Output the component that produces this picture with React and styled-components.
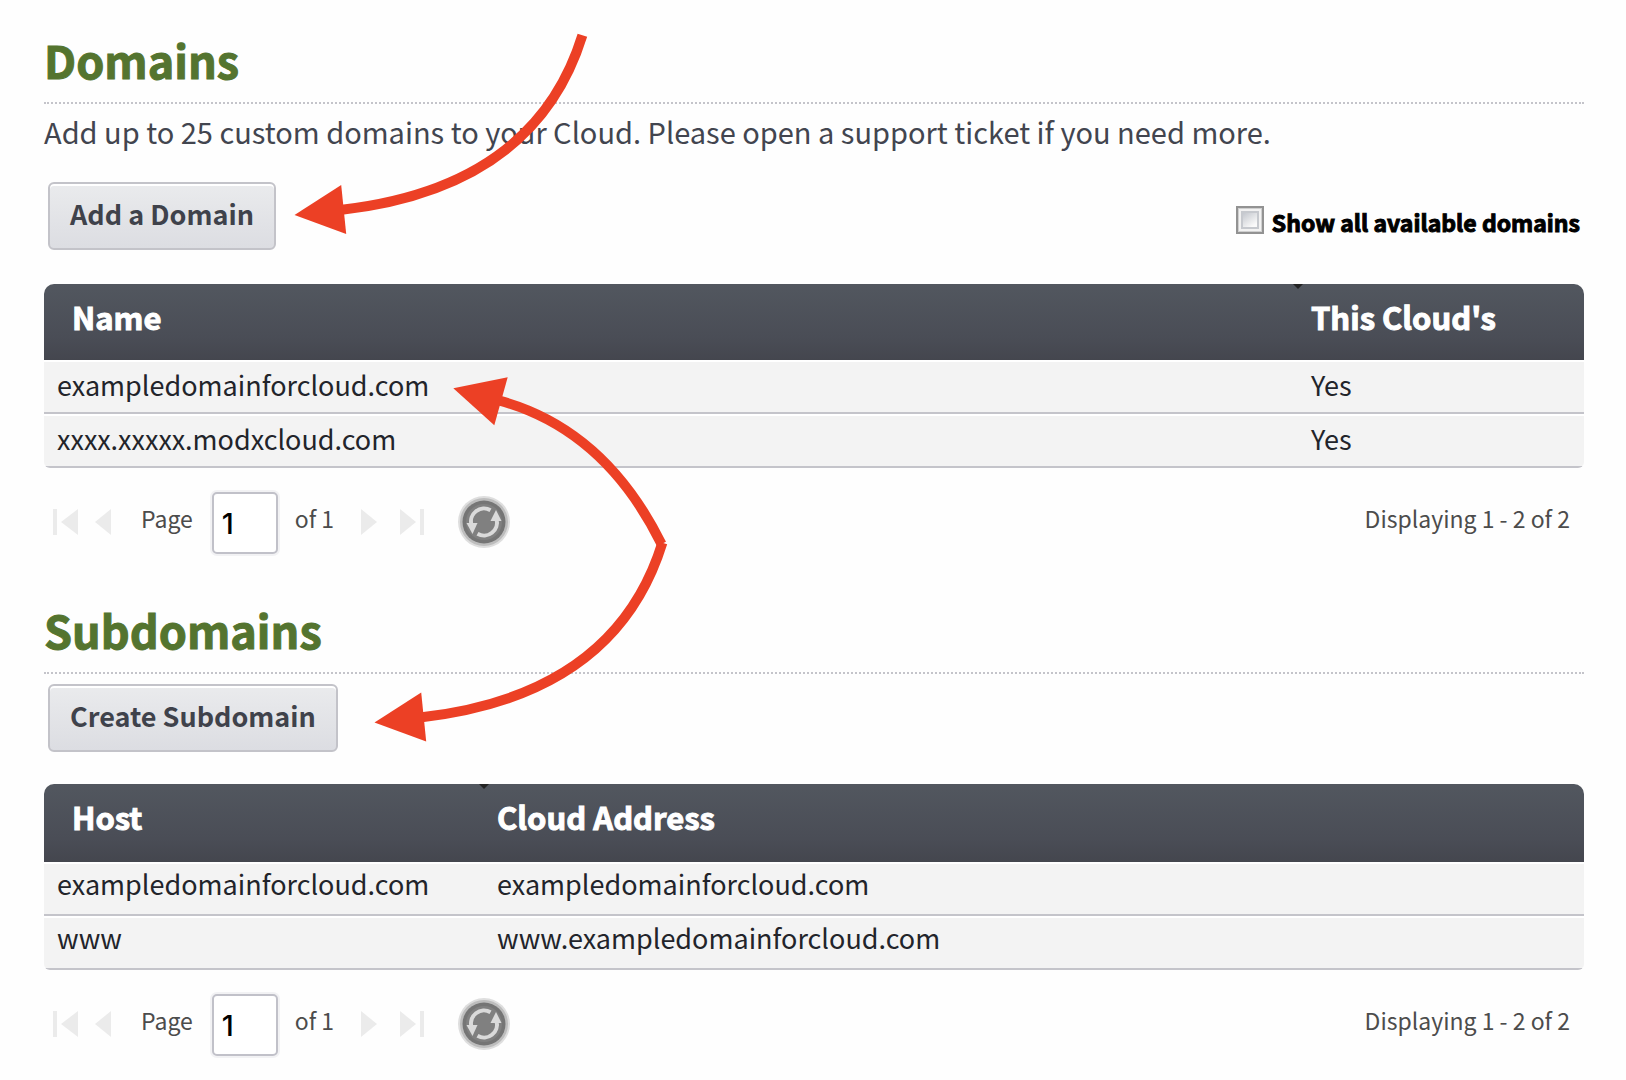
import React, { useState } from "react";
import styled, { createGlobalStyle } from "styled-components";

const GlobalStyle = createGlobalStyle`
  *, *::before, *::after { box-sizing: border-box; }
  body {
    margin: 0;
    background: #fefefe;
    color: #22242a;
    font-family: "Noto Sans CJK SC", "Open Sans", sans-serif;
    font-size: 27px;
    line-height: 36px;
  }
`;

const Page = styled.main`
  position: relative;
  padding: 30px 42px 24px 44px;
`;

const Section = styled.section`
  & + & {
    margin-top: 46px;
  }
`;

const Heading = styled.h2`
  margin: 0;
  padding-bottom: 12px;
  border-bottom: 2px dotted #c4c4ca;
  color: #54742f;
  font-size: 45px;
  font-weight: 700;
  line-height: 60px;
  -webkit-text-stroke: 1px currentColor;
`;

const Intro = styled.p`
  margin: 7px 0 31px;
  color: #42454f;
  font-size: 29px;
  line-height: 40px;
`;

const Toolbar = styled.div`
  display: flex;
  align-items: flex-start;
  justify-content: space-between;
  margin: ${(p) => (p.$spaced ? "10px 0 32px" : "0 0 34px")};
  padding: 0 4px;
`;

const ActionButton = styled.button`
  padding: 10px 20px 14px;
  border: 2px solid #c3c3c9;
  border-radius: 6px;
  background: linear-gradient(#eaebed, #dcdde2);
  box-shadow: inset 0 2px 0 #fff;
  color: #3f424b;
  font-family: inherit;
  font-size: 27px;
  font-weight: 700;
  line-height: 40px;
  cursor: pointer;
`;

const CheckLabel = styled.label`
  display: flex;
  gap: 8px;
  padding-top: 24px;
  color: #000;
  font-size: 23px;
  font-weight: 700;
  line-height: 32px;
  -webkit-text-stroke: 1px currentColor;
`;

const Checkbox = styled.input`
  appearance: none;
  width: 28px;
  height: 28px;
  margin: 0;
  border: 2px solid #929292;
  background: linear-gradient(145deg, #bfc3ca, #fafafa 80%) content-box, #e9eaeb;
  padding: 4px;
  box-shadow: inset 0 0 0 1px #cfcfcf, inset 0 0 0 3px #f2f2f2, inset 0 0 0 5px #c6c9ce;
  &:checked {
    background: #54742f content-box, #f4f4f4;
  }
`;

const Grid = styled.table`
  width: 100%;
  border-spacing: 0;
  border-radius: 10px 10px 6px 6px;
  overflow: hidden;
  table-layout: fixed;
`;

const GridHead = styled.thead`
  background: linear-gradient(#52575f, #4a4d56 70%, #44464e);
`;

const HeadCell = styled.th`
  position: relative;
  width: ${(p) => p.$width || "auto"};
  padding: 11px 13px ${(p) => (p.$compact ? 23 : 21)}px;
  color: #fff;
  font-size: 31px;
  font-weight: 700;
  line-height: 44px;
  text-align: left;
  -webkit-text-stroke: 1px currentColor;

  &:first-child {
    padding-left: 28px;
  }

  &:not(:first-child)::before {
    content: "";
    position: absolute;
    top: 0;
    left: -5px;
    border: solid transparent;
    border-width: 5px 5px 0;
    border-top-color: #232323;
  }
`;

const Cell = styled.td`
  padding: ${(p) => (p.$compact ? "2px 13px 12px" : "5px 13px 9px")};
  border-top: 2px solid #fff;
  border-bottom: 2px solid #c4c4ca;
  background: #f3f3f3;
  background-clip: padding-box;
`;

const Pager = styled.nav`
  display: flex;
  align-items: center;
  margin-top: 24px;
  padding: 0 14px 0 8px;
  color: #4c4c4c;
  font-size: 23px;
  line-height: 32px;
`;

const PagerGroup = styled.div`
  display: flex;
  align-items: center;
  gap: ${(p) => p.$gap}px;
  margin-right: ${(p) => p.$after || 0}px;
`;

const PagerLabel = styled.label`
  padding-bottom: 10px;
`;

const PagerText = styled.span`
  padding-bottom: 10px;
`;

const PagerStatus = styled.span`
  margin-left: auto;
  padding-bottom: 10px;
`;

const PageInput = styled.input`
  width: 66px;
  height: 62px;
  padding: 0 8px;
  border: 2px solid #c1c1c9;
  border-radius: 5px;
  background: #fff;
  box-shadow: 0 0 0 2px #f2f2f4;
  color: #000;
  font-family: Inter, "Liberation Sans", sans-serif;
  font-size: 29px;
  font-weight: 500;
`;

const IconButton = styled.button`
  display: flex;
  padding: 0 0 2px;
  border: 0;
  background: none;
  cursor: pointer;
`;

const ArrowLayer = styled.svg`
  position: absolute;
  top: 0;
  left: 0;
  pointer-events: none;
`;

const StepIcon = ({ width, points, bar }) => (
  <svg width={width} height="26" viewBox={`0 0 ${width} 26`} fill="#ebebeb" aria-hidden="true">
    <polygon points={points} />
    {bar !== undefined && <rect x={bar} y="0" width="4" height="26" />}
  </svg>
);

const RefreshIcon = () => (
  <svg width="52" height="52" viewBox="0 0 52 52" aria-hidden="true">
    <circle cx="26" cy="26" r="26" fill="#dedede" />
    <circle cx="26" cy="26" r="24" fill="#bdbdbd" />
    <circle cx="26" cy="26" r="21.5" fill="#757575" />
    <circle cx="26" cy="26" r="18" fill="#808080" />
    <g fill="none" stroke="#dadada" strokeWidth="4">
      <path d="M13.5 29 A13 13 0 0 1 32.5 14.2" />
      <path d="M38.5 23 A13 13 0 0 1 19.5 37.8" />
    </g>
    <g fill="#dadada">
      <polygon points="8.5,27 19.5,27 14.5,38" />
      <polygon points="32.5,25 43.5,25 38,14" />
    </g>
  </svg>
);

function DataGrid({ columns, rows, compact }) {
  return (
    <Grid>
      <GridHead>
        <tr>
          {columns.map((column) => (
            <HeadCell key={column.title} scope="col" $width={column.width} $compact={compact}>
              {column.title}
            </HeadCell>
          ))}
        </tr>
      </GridHead>
      <tbody>
        {rows.map((row) => (
          <tr key={row[0]}>
            {row.map((value, i) => (
              <Cell key={i} $compact={compact}>{value}</Cell>
            ))}
          </tr>
        ))}
      </tbody>
    </Grid>
  );
}

function Paging({ id, name }) {
  const [page, setPage] = useState("1");
  return (
    <Pager aria-label={name}>
      <PagerGroup $gap={16} $after={29}>
        <IconButton type="button" aria-label="First page">
          <StepIcon width={26} points="26,0 26,26 9,13" bar={1} />
        </IconButton>
        <IconButton type="button" aria-label="Previous page">
          <StepIcon width={18} points="17,0 17,26 1,13" />
        </IconButton>
      </PagerGroup>
      <PagerGroup $gap={19} $after={17}>
        <PagerLabel htmlFor={id}>Page</PagerLabel>
        <PageInput id={id} value={page} onChange={(e) => setPage(e.target.value)} />
      </PagerGroup>
      <PagerGroup $gap={26} $after={22}>
        <PagerText>of 1</PagerText>
        <IconButton type="button" aria-label="Next page">
          <StepIcon width={18} points="1,0 1,26 17,13" />
        </IconButton>
      </PagerGroup>
      <PagerGroup $gap={32}>
        <IconButton type="button" aria-label="Last page">
          <StepIcon width={26} points="0,0 0,26 16,13" bar={20} />
        </IconButton>
        <IconButton type="button" aria-label="Refresh">
          <RefreshIcon />
        </IconButton>
      </PagerGroup>
      <PagerStatus>Displaying 1 - 2 of 2</PagerStatus>
    </Pager>
  );
}

const Arrows = () => (
  <ArrowLayer width="720" height="760" viewBox="0 0 720 760" aria-hidden="true">
    <defs>
      <g id="sweep">
        <path d="M582.4 35.3 Q535 188 340 210" fill="none" stroke="#ec4025" strokeWidth="10" />
        <polygon points="294.5,215 341.2,185 346.2,234" fill="#ec4025" />
      </g>
    </defs>
    <use href="#sweep" />
    <use href="#sweep" x="80" y="507.5" />
    <path d="M661.5 544 Q604.5 429 499 400.5" fill="none" stroke="#ec4025" strokeWidth="10" />
    <polygon points="453.3,388.3 507.7,377.3 494.3,425.3" fill="#ec4025" />
  </ArrowLayer>
);

export default function App() {
  return (
    <>
      <GlobalStyle />
      <Page>
        <Section>
          <Heading>Domains</Heading>
          <Intro>
            Add up to 25 custom domains to your Cloud. Please open a support ticket if you need more.
          </Intro>
          <Toolbar>
            <ActionButton type="button">Add a Domain</ActionButton>
            <CheckLabel>
              <Checkbox type="checkbox" />
              Show all available domains
            </CheckLabel>
          </Toolbar>
          <DataGrid
            columns={[{ title: "Name" }, { title: "This Cloud's", width: "286px" }]}
            rows={[
              ["exampledomainforcloud.com", "Yes"],
              ["xxxx.xxxxx.modxcloud.com", "Yes"],
            ]}
          />
          <Paging id="domains-page" name="Domains pages" />
        </Section>
        <Section>
          <Heading>Subdomains</Heading>
          <Toolbar $spaced>
            <ActionButton type="button">Create Subdomain</ActionButton>
          </Toolbar>
          <DataGrid
            compact
            columns={[{ title: "Host", width: "440px" }, { title: "Cloud Address" }]}
            rows={[
              ["exampledomainforcloud.com", "exampledomainforcloud.com"],
              ["www", "www.exampledomainforcloud.com"],
            ]}
          />
          <Paging id="subdomains-page" name="Subdomains pages" />
        </Section>
        <Arrows />
      </Page>
    </>
  );
}
